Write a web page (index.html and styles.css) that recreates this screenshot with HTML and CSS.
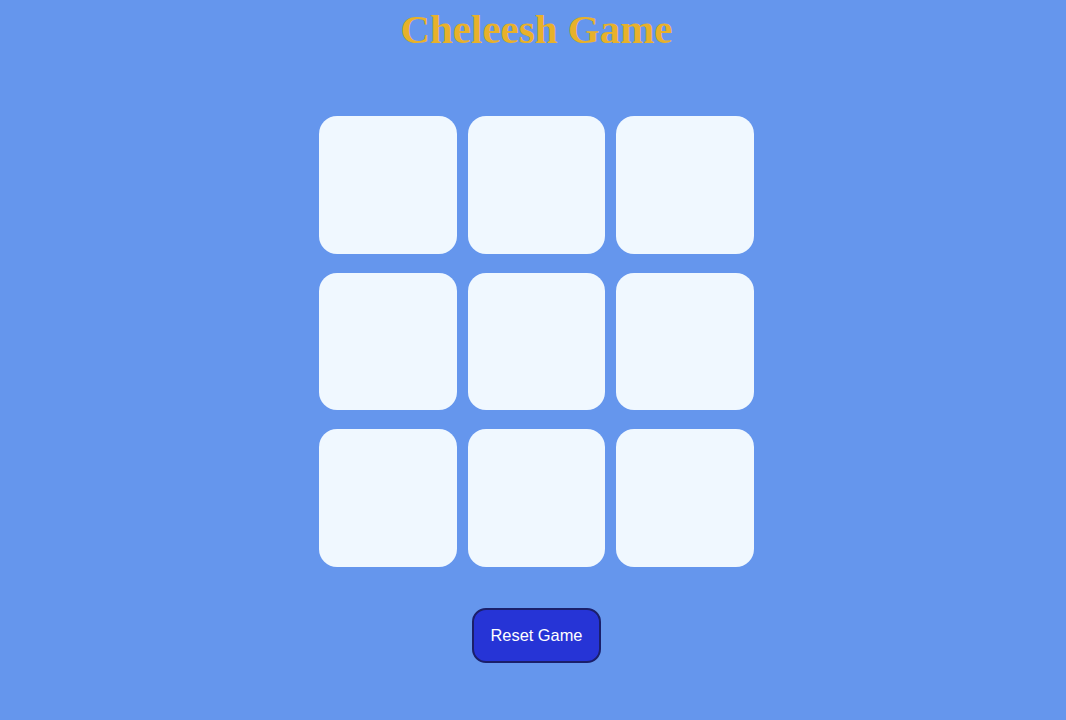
FILE: index.html
```html
<!DOCTYPE html>
<html>
<head>
<meta charset="utf-8">
<link rel="stylesheet" href="styles.css">
</head>
<body>
<main class="page">
  <h1 class="title">Cheleesh Game</h1>
  <div class="board">
    <div class="cell"></div>
    <div class="cell"></div>
    <div class="cell"></div>
    <div class="cell"></div>
    <div class="cell"></div>
    <div class="cell"></div>
    <div class="cell"></div>
    <div class="cell"></div>
    <div class="cell"></div>
  </div>
  <button class="reset">Reset Game</button>
</main>
</body>
</html>
```
FILE: styles.css
```css
html, body {
  margin: 0;
  padding: 0;
  background: #6596ed;
  height: 100%;
}
.page {
  display: flex;
  flex-direction: column;
  align-items: center;
  padding-left: 7px;
}
.title {
  margin: 6px 0 0 0;
  font-family: "Liberation Serif", "Times New Roman", serif;
  font-weight: bold;
  font-size: 41px;
  line-height: 46px;
  color: #e8b12a;
}
.board {
  margin-top: 64px;
  display: grid;
  grid-template-columns: repeat(3, 137.5px);
  grid-auto-rows: 137.5px;
  column-gap: 11px;
  row-gap: 19px;
}
.cell {
  background: #f0f8ff;
  border-radius: 18px;
}
.reset {
  margin-top: 41.5px;
  width: 129px;
  height: 55px;
  background: #2634d6;
  color: #ffffff;
  border: 2px solid #1b1f6a;
  border-radius: 14px;
  font-family: "Liberation Sans", Arial, sans-serif;
  font-size: 16.4px;
  cursor: pointer;
}
```
